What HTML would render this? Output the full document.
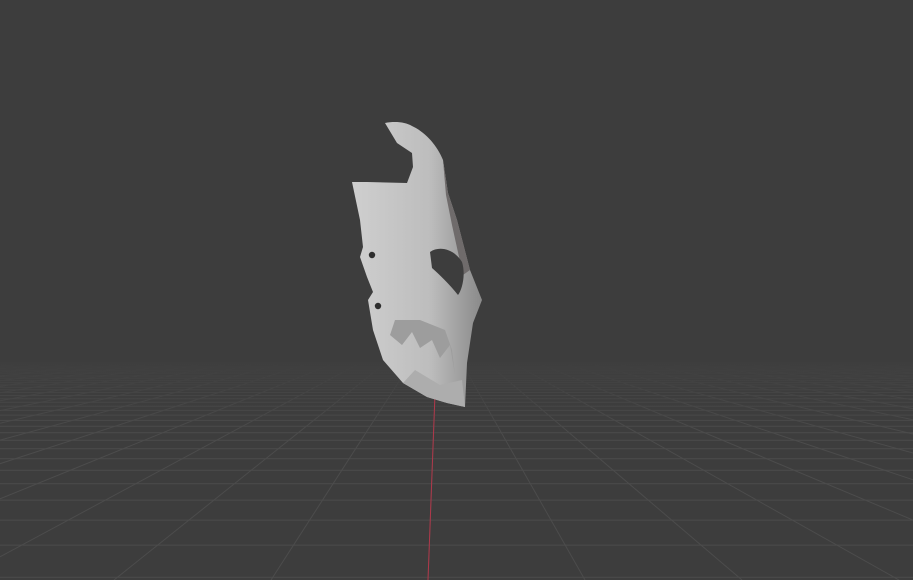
<!DOCTYPE html>
<html><head><meta charset="utf-8"><style>
html,body{margin:0;padding:0;background:#3d3d3d;overflow:hidden;width:913px;height:580px}
svg{display:block}
</style></head><body>
<svg id="s" width="913" height="580" viewBox="0 0 913 580" xmlns="http://www.w3.org/2000/svg">
<defs>
<linearGradient id="fade" x1="0" y1="0" x2="0" y2="1">
<stop offset="0" stop-color="#3d3d3d" stop-opacity="1"/>
<stop offset="0.15" stop-color="#3d3d3d" stop-opacity="0.75"/>
<stop offset="1" stop-color="#3d3d3d" stop-opacity="0"/>
</linearGradient>
<linearGradient id="mg" x1="0" y1="0" x2="1" y2="0">
<stop offset="0" stop-color="#cfcfcf"/>
<stop offset="0.6" stop-color="#bdbdbd"/>
<stop offset="1" stop-color="#8a8a8a"/>
</linearGradient>
<clipPath id="cp"><rect x="0" y="362" width="913" height="218"/></clipPath>
</defs>
<rect width="913" height="580" fill="#3d3d3d"/>
<g id="grid" stroke="#4c4c4c" stroke-width="1" fill="none" clip-path="url(#cp)"></g>
<rect x="0" y="360" width="913" height="75" fill="url(#fade)"/>
<line x1="435.5" y1="380" x2="428" y2="580" stroke="#b0384a" stroke-width="1"/>
<path d="M385,123 C395,121 405,122 412,126 C425,132 437,145 443,160 L448,193 L457,220 L470,270 L482,300 L473,323 L467,363 L465,407 L447,403 L427,397 L403,383 L383,360 L373,330 L368,300 L373,292 L367,277 L360,257 L363,247 L360,220 L352,182 L367,182 L407,183 L413,167 L412,153 L397,143 Z" fill="url(#mg)"/>
<path d="M443,160 L448,193 L457,220 L470,270 L463,275 L452,225 L446,195 Z" fill="#6f6b6b"/>
<path d="M430,252 C440,245 455,250 462,262 C466,275 462,290 458,295 C450,285 440,275 432,268 Z" fill="#3d3d3d"/>
<path d="M390,335 L402,345 L412,332 L420,348 L432,340 L440,358 L450,345 L455,375 L452,350 L445,330 L420,320 L395,320 Z" fill="#9d9d9d"/>
<path d="M403,383 L427,397 L447,403 L465,407 L462,380 L440,385 L415,370 Z" fill="#adadad"/>
<circle cx="372" cy="255" r="3.2" fill="#2e2e2e"/>
<circle cx="378" cy="306" r="3.2" fill="#2e2e2e"/>
</svg>
<script>
var g=document.getElementById('grid'),s='';
for(var i=-1;i<80;i++){var y=321+1786/(6.97+i);if(y<362||y>585)continue;s+='<line x1="0" y1="'+y.toFixed(1)+'" x2="913" y2="'+y.toFixed(1)+'"/>';}
var vx=438,vy=321;
for(var j=-40;j<=40;j++){var bx=428+157*j;
 s+='<line x1="'+vx+'" y1="'+vy+'" x2="'+bx.toFixed(1)+'" y2="580"/>';}
g.innerHTML=s;
</script>
</body></html>
